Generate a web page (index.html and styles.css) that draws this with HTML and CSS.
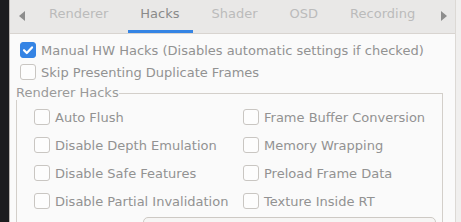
FILE: index.html
```html
<!DOCTYPE html>
<html lang="en">
  <head>
    <meta charset="utf-8">
    <title>Hacks</title>
    <link rel="stylesheet" href="styles.css">
  </head>
  <body>
    <div class="tela">
      <div class="borda-esq"></div>
      <div class="dialogo">
        <div class="abas">
          <span class="seta"><svg width="6" height="10" viewBox="0 0 6 10"><polygon points="6,0 6,10 0,5" fill="#8d8d8d"/></svg></span>
          <span class="aba">Renderer</span>
          <span class="aba ativa">Hacks</span>
          <span class="aba">Shader</span>
          <span class="aba">OSD</span>
          <span class="aba">Recording</span>
          <span class="espaco"></span>
          <span class="seta"><svg width="6" height="10" viewBox="0 0 6 10"><polygon points="0,0 6,5 0,10" fill="#8d8d8d"/></svg></span>
        </div>
        <div class="pagina">
          <label class="opcao topo"><span class="caixa marcada"><svg width="12" height="12" viewBox="0 0 12 12"><path d="M2 6.2 L4.8 9 L10 3.4" stroke="#fff" stroke-width="2.2" fill="none" stroke-linecap="round" stroke-linejoin="round"/></svg></span>Manual HW Hacks (Disables automatic settings if checked)</label>
          <label class="opcao topo"><span class="caixa"></span>Skip Presenting Duplicate Frames</label>

          <div class="quadro">
            <div class="quadro-titulo">
              <span>Renderer Hacks</span>
              <span class="traco"></span>
            </div>
            <div class="quadro-corpo">
              <label class="opcao"><span class="caixa"></span>Auto Flush</label>
              <label class="opcao"><span class="caixa"></span>Frame Buffer Conversion</label>
              <label class="opcao"><span class="caixa"></span>Disable Depth Emulation</label>
              <label class="opcao"><span class="caixa"></span>Memory Wrapping</label>
              <label class="opcao"><span class="caixa"></span>Disable Safe Features</label>
              <label class="opcao"><span class="caixa"></span>Preload Frame Data</label>
              <label class="opcao"><span class="caixa"></span>Disable Partial Invalidation</label>
              <label class="opcao"><span class="caixa"></span>Texture Inside RT</label>
              <div class="linha-combo">
                <span class="combo"></span>
              </div>
            </div>
          </div>
        </div>
      </div>
      <div class="borda-dir">
        <div class="escuro"></div>
        <div class="claro"></div>
        <div class="azul"></div>
      </div>
    </div>
  </body>
</html>
```

FILE: styles.css
```css
* {
  margin: 0;
  box-sizing: border-box;
}

body {
  font-family: "DejaVu Sans", sans-serif;
  font-size: 13px;
  background: #1b1b1b;
  overflow: hidden;
}

.tela {
  display: flex;
  width: 461px;
  height: 222px;
}

.borda-esq {
  width: 9px;
  background: #1b1c1e;
}

.dialogo {
  width: 447px;
  background: #fafafa;
  border-left: 1px solid #b9b6b2;
  border-right: 1px solid #dcd9d5;
  overflow: hidden;
}

.borda-dir {
  flex: 1;
  display: flex;
  flex-direction: column;
  border-left: 5px solid #f0efee;
}

.escuro {
  height: 75px;
  background: #1e1e1e;
}

.claro {
  height: 25px;
  background: #ececec;
}

.azul {
  flex: 1;
  background: #3a7fd6;
}

.abas {
  display: flex;
  align-items: center;
  height: 34px;
  background: #e9e8e7;
  border-bottom: 1px solid #d8d4d0;
}

.seta {
  width: 23px;
  display: flex;
  justify-content: center;
  padding-bottom: 2px;
}

.aba {
  position: relative;
  height: 33px;
  line-height: 28px;
  padding: 0 16px;
  color: #bbbbbb;
}

.aba.ativa {
  color: #8a8a8a;
}

.aba.ativa::after {
  content: "";
  position: absolute;
  left: 4px;
  right: 3px;
  bottom: 0;
  height: 3px;
  background: #3584e4;
}

.espaco {
  flex: 1;
}

.pagina {
  padding: 5px 0 0 6px;
  color: #929292;
}

.opcao {
  display: flex;
  align-items: center;
  height: 28px;
  white-space: nowrap;
}

.opcao.topo {
  height: 22px;
  margin-left: 4px;
}

.caixa {
  width: 16px;
  height: 16px;
  margin-right: 5px;
  border: 1px solid #c9c6c2;
  border-radius: 3px;
  background: #fdfdfd;
  display: flex;
  align-items: center;
  justify-content: center;
  flex: none;
}

.caixa.marcada {
  background: #3584e4;
  border-color: #3584e4;
}

.quadro {
  width: 427px;
  margin-top: 3px;
}

.quadro-titulo {
  display: flex;
  line-height: 14px;
  color: #9a9a9a;
}

.traco {
  flex: 1;
  margin-top: 7px;
  border-top: 1px solid #d3cfca;
  border-right: 1px solid #d3cfca;
}

.quadro-corpo {
  display: grid;
  grid-template-columns: 209px 1fr;
  padding: 3px 0 10px 17px;
  border-left: 1px solid #d3cfca;
  border-right: 1px solid #d3cfca;
  border-bottom: 1px solid #d3cfca;
}

.linha-combo {
  grid-column: 1 / 3;
  display: flex;
  padding: 2px 6px 0 109px;
}

.combo {
  flex: 1;
  height: 34px;
  border: 1px solid #cdc9c4;
  border-radius: 5px;
  background: #f6f5f4;
}
```
